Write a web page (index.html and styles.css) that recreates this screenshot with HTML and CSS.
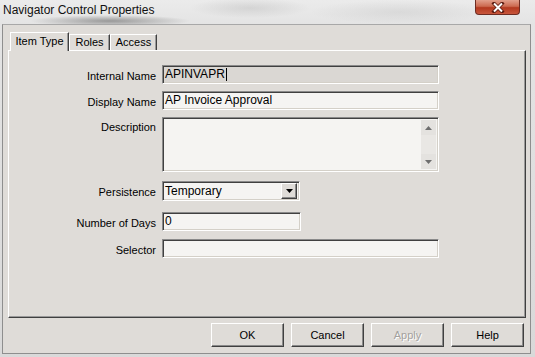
FILE: index.html
```html
<!DOCTYPE html>
<html>
<head>
<meta charset="utf-8" />
<title>Navigator Control Properties</title>
<link rel="stylesheet" href="styles.css">
</head>
<body>
<div class="window">
  <div class="titlebar">
    <span class="title">Navigator Control Properties</span>
    <div class="close">
      <svg width="14" height="11" viewBox="0 0 14 11">
        <path d="M3 1.5 L11 9.5 M11 1.5 L3 9.5" stroke="#5a1a10" stroke-width="3.6" stroke-linecap="square"/>
        <path d="M3 1.5 L11 9.5 M11 1.5 L3 9.5" stroke="#fff" stroke-width="2"/>
      </svg>
    </div>
  </div>
  <div class="dialog">
    <div class="tabs">
      <div class="tab active">Item Type</div>
      <div class="tab roles">Roles</div>
      <div class="tab access">Access</div>
    </div>
    <div class="panel">
      <div class="form">
        <div class="label">Internal Name</div>
        <div class="field long readonly">APINVAPR<span class="caret"></span></div>

        <div class="label row2">Display Name</div>
        <div class="field long row2">AP Invoice Approval</div>

        <div class="label top row2">Description</div>
        <div class="field long area row2">
          <div class="scroll">
            <div class="sbtn"><svg width="7" height="4" viewBox="0 0 7 4"><path d="M0 4 L3.5 0 L7 4 Z" fill="#6e6e6e"/></svg></div>
            <div class="sbtn"><svg width="7" height="4" viewBox="0 0 7 4"><path d="M0 0 L3.5 4 L7 0 Z" fill="#6e6e6e"/></svg></div>
          </div>
        </div>

        <div class="label row4">Persistence</div>
        <div class="field short select row4">Temporary
          <div class="drop"><svg width="7" height="4" viewBox="0 0 7 4"><path d="M0 0 L3.5 4 L7 0 Z" fill="#000"/></svg></div>
        </div>

        <div class="label row5">Number of Days</div>
        <div class="field short row5">0</div>

        <div class="label row6">Selector</div>
        <div class="field long row6"></div>
      </div>
    </div>
    <div class="buttons">
      <div class="button">OK</div>
      <div class="button">Cancel</div>
      <div class="button disabled">Apply</div>
      <div class="button">Help</div>
    </div>
  </div>
</div>
</body>
</html>
```

FILE: styles.css
```css
* {
  box-sizing: border-box;
}
body {
  margin: 0;
  font-family: "Liberation Sans", Arial, sans-serif;
  font-size: 11px;
  color: #000;
}
.window {
  width: 535px;
  height: 357px;
  overflow: hidden;
  background:
    radial-gradient(ellipse 80px 6px at 110px 21px, rgba(90, 90, 90, 0.55), rgba(90, 90, 90, 0)),
    radial-gradient(ellipse 60px 10px at 250px 8px, rgba(150, 150, 150, 0.25), rgba(150, 150, 150, 0)),
    radial-gradient(ellipse 90px 12px at 400px 12px, rgba(160, 160, 160, 0.2), rgba(160, 160, 160, 0)),
    linear-gradient(to bottom, #ebebeb, #e4e4e4 24px, #d9d9d9);
  display: flex;
  flex-direction: column;
}
.titlebar {
  height: 24px;
  display: flex;
  align-items: flex-start;
  padding-left: 3px;
}
.title {
  font-size: 12px;
  padding-top: 3px;
  color: #111;
}
.close {
  margin-left: auto;
  margin-right: 15px;
  width: 45px;
  height: 15px;
  border: 1px solid #6e2c22;
  border-top: none;
  border-radius: 0 0 4px 4px;
  background: linear-gradient(to bottom, #e2a08c, #cc6a50 45%, #b3391f 55%, #c8563c);
  display: flex;
  align-items: center;
  justify-content: center;
}
.dialog {
  flex: 1;
  margin: 0 4px 3px 2px;
  border: 1px solid #8e8e8e;
  border-top-color: #a8a8a8;
  background: #dfdcd8;
  padding: 7px 0 0 5px;
  display: flex;
  flex-direction: column;
}
.tabs {
  display: flex;
  align-items: flex-end;
  height: 18px;
  margin-left: 2px;
}
.tab {
  height: 16px;
  border-top: 1px solid #fff;
  border-left: 1px solid #fff;
  border-right: 1px solid #404040;
  box-shadow: inset -1px 0 #9a9a9a;
  text-align: center;
  line-height: 15px;
  background: #dfdcd8;
}
.tab.active {
  width: 59px;
  height: 19px;
  margin-bottom: -1px;
  position: relative;
  z-index: 1;
  line-height: 16px;
}
.roles {
  width: 41px;
}
.access {
  width: 47px;
}
.panel {
  width: 518px;
  height: 268px;
  border-top: 1px solid #fff;
  border-left: 1px solid #fff;
  border-right: 1px solid #404040;
  border-bottom: 1px solid #404040;
  box-shadow: inset -1px -1px #9a9a9a;
  padding-top: 14px;
}
.form {
  display: grid;
  grid-template-columns: 147px auto;
  column-gap: 6px;
  row-gap: 7px;
  align-items: center;
}
.label {
  text-align: right;
  padding-top: 2px;
}
.label.top {
  align-self: start;
  padding-top: 4px;
}
.row4 {
  margin-top: 2px;
}
.row5 {
  margin-top: 4px;
}
.row6 {
  margin-top: 1px;
}
.field {
  height: 19px;
  border: 1px solid;
  border-color: #8a8a8a #fff #fff #8a8a8a;
  box-shadow: inset 1px 1px #404040, inset -1px -1px #d4d0c8;
  background: #f5f4f2;
  font-size: 12px;
  line-height: 17px;
  padding-left: 2px;
  display: flex;
  align-items: center;
}
.field.long {
  width: 277px;
}
.field.short {
  width: 139px;
}
.field.readonly {
  background: #dad7d3;
}
.caret {
  width: 1px;
  height: 13px;
  background: #000;
  margin-left: 1px;
}
.field.area {
  height: 55px;
  justify-content: flex-end;
  align-items: stretch;
  padding: 2px 2px 2px 0;
}
.scroll {
  width: 15px;
  background: #e9e7e4;
  display: flex;
  flex-direction: column;
  justify-content: space-between;
}
.sbtn {
  height: 15px;
  display: flex;
  align-items: center;
  justify-content: center;
  background: #e4e2df;
}
.field.select {
  height: 20px;
  width: 138px;
  padding-right: 2px;
}
.drop {
  margin-left: auto;
  width: 16px;
  height: 16px;
  background: #dfdcd8;
  border: 1px solid;
  border-color: #fff #404040 #404040 #fff;
  box-shadow: inset -1px -1px #8a8a8a;
  display: flex;
  align-items: center;
  justify-content: center;
}
.buttons {
  display: flex;
  justify-content: flex-end;
  gap: 7px;
  margin-top: 5px;
  padding-right: 6px;
}
.button {
  width: 73px;
  height: 24px;
  border: 1px solid;
  border-color: #fff #404040 #404040 #fff;
  box-shadow: inset -1px -1px #8a8a8a;
  text-align: center;
  line-height: 22px;
  font-size: 11px;
}
.button.disabled {
  color: #a3a19e;
  text-shadow: 1px 1px #fff;
}
```
